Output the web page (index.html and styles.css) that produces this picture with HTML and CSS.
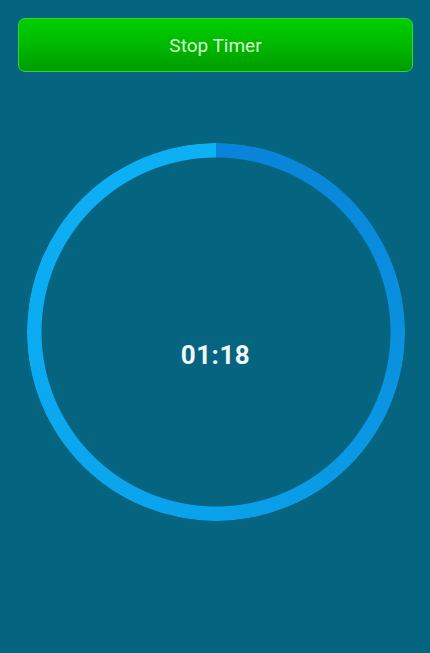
FILE: index.html
```html
<!DOCTYPE html>
<html>
<head>
<meta charset="utf-8">
<link rel="stylesheet" href="styles.css">
</head>
<body>
<div class="page">
  <button class="stop-btn">Stop Timer</button>
  <div class="ring-wrap">
    <div class="ring"></div>
    <div class="time">01:18</div>
  </div>
</div>
</body>
</html>
```
FILE: styles.css
```css
html, body {
  margin: 0;
  padding: 0;
  background: #05647f;
  height: 100%;
}
.page {
  padding: 18px 17px 0 18px;
  display: flex;
  flex-direction: column;
  align-items: stretch;
  font-family: Roboto, "Liberation Sans", sans-serif;
}
.stop-btn {
  height: 54px;
  border: 1px solid #2ed82e;
  border-radius: 7px;
  background: linear-gradient(to bottom, #00cf00 0%, #00b800 50%, #009c00 100%);
  color: #d6f7cf;
  font-family: Roboto, "Liberation Sans", sans-serif;
  font-size: 19px;
  padding: 0;
}
.ring-wrap {
  position: relative;
  width: 378px;
  height: 378px;
  margin: 71px auto 0;
  display: flex;
  align-items: center;
  justify-content: center;
}
.ring {
  position: absolute;
  inset: 0;
  border-radius: 50%;
  background: conic-gradient(from 0deg, #0883d9 0deg, #0a90df 90deg, #0aa2ea 180deg, #0cabf2 270deg, #0db1f6 360deg);
  -webkit-mask: radial-gradient(circle, transparent 174px, #000 175px);
  mask: radial-gradient(circle, transparent 174px, #000 175px);
}
.time {
  position: relative;
  padding-top: 46px;
  color: #f2f6f8;
  font-size: 26px;
  font-weight: bold;
  letter-spacing: 0.5px;
}
```
